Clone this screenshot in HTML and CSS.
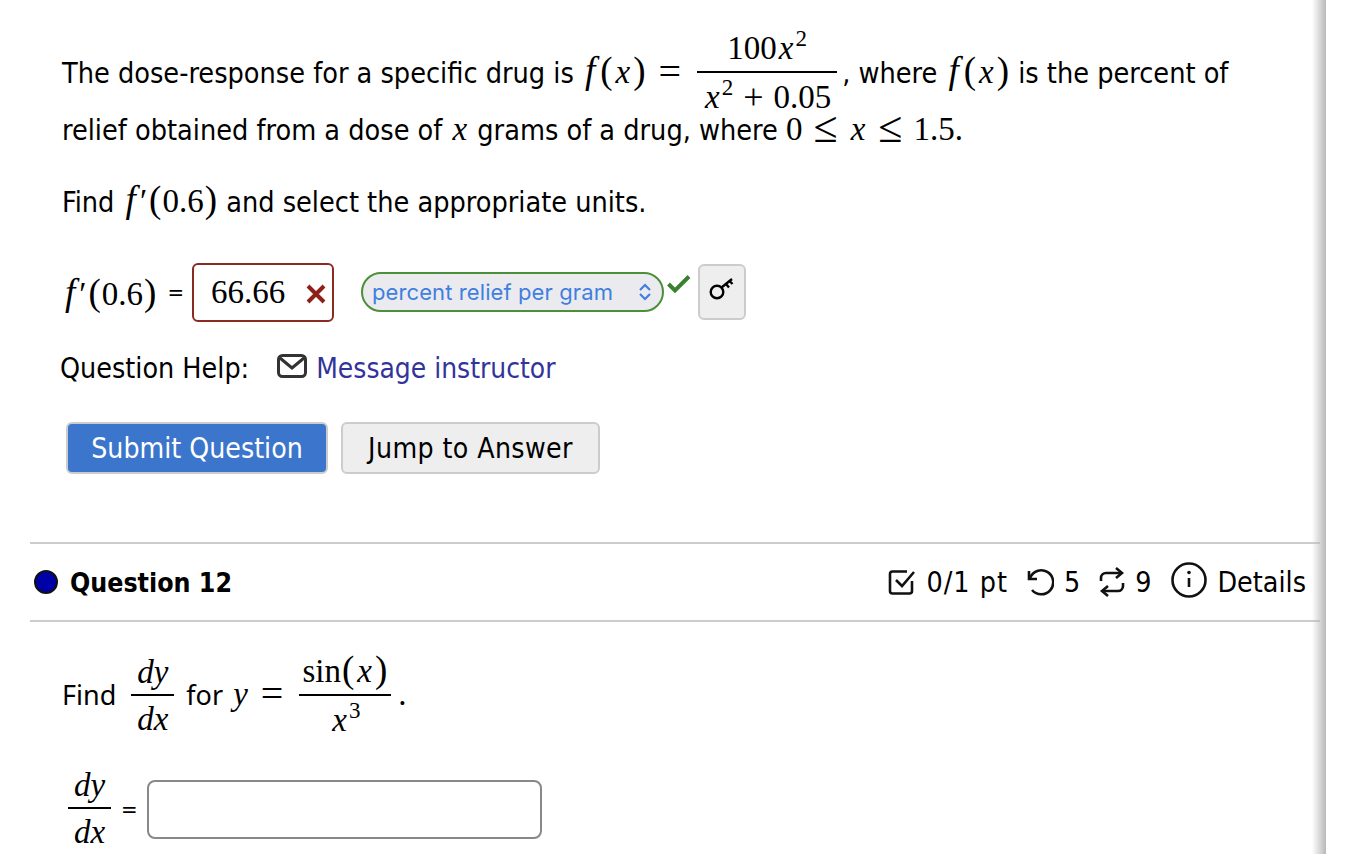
FILE: index.html
```html
<!DOCTYPE html>
<html lang="en">
<head>
<meta charset="utf-8">
<title>Question</title>
<link rel="stylesheet" href="styles.css">
</head>
<body>
<div class="page">
  <main class="main">
    <section class="body-a">
      <p class="line line-1">The dose-response for a specific drug is <span class="m"><i class="f">f</i><span class="p">(</span><i class="x">x</i><span class="p">)</span><span class="r eq-main">=</span></span><span class="frac frac-big"><span class="num">100<i class="x">x</i><sup>2</sup></span><span class="den"><i class="x">x</i><sup>2</sup><span class="r plus">+</span>0.05</span></span><span class="comma">,</span> where <span class="m"><i class="f">f</i><span class="p">(</span><i class="x">x</i><span class="p">)</span></span> is the percent of</p>
      <p class="line line-2">relief obtained from a dose of <span class="m"><i class="x">x</i></span> grams of a drug, where <span class="m">0<span class="r le">≤</span><i class="x">x</i><span class="r le">≤</span>1.5.</span></p>
      <p class="line line-3">Find <span class="m"><i class="f">f</i><span class="prime">′</span><span class="p">(</span>0.6<span class="p">)</span></span> and select the appropriate units.</p>
      <div class="answer-row">
        <span class="m answer-label"><i class="f">f</i><span class="prime">′</span><span class="p">(</span>0.6<span class="p">)</span></span>
        <span class="eq">=</span>
        <div class="field bad"><span class="m">66.66</span>
          <svg class="x-icon" viewBox="0 0 20 20"><path d="M2 2 18 18M18 2 2 18"/></svg>
        </div>
        <div class="select"><span>percent relief per gram</span>
          <svg class="chev" viewBox="0 0 14 20"><path d="M2 8 7 3l5 5M2 12l5 5 5-5"/></svg>
        </div>
        <svg class="check" viewBox="0 0 24 20"><path d="M1.500 10l6.500 6.500L22 2.500"/></svg>
        <button class="key-btn" type="button">
          <svg viewBox="0 0 28 26"><circle cx="9" cy="17" r="6.300"/><path d="M13.500 12.500 24 4M18 9l3 3.500M21.500 6l3 3"/></svg>
        </button>
      </div>
      <div class="help">
        <span class="help-label">Question Help:</span>
        <svg class="mail" viewBox="0 0 30 24"><rect x="1.500" y="1.500" width="27" height="21" rx="4"/><path d="M3 4l12 10L27 4"/></svg>
        <a class="help-link" href="#">Message instructor</a>
      </div>
      <div class="buttons">
        <button class="btn primary" type="button">Submit Question</button>
        <button class="btn jump" type="button">Jump to Answer</button>
      </div>
    </section>
    <header class="q-head">
      <div class="q-title"><span class="dot"></span><h2>Question 12</h2></div>
      <div class="q-meta">
        <svg class="ic ic-check" viewBox="0 0 28 28"><path d="M24 13v10a2.500 2.500 0 0 1-2.500 2.500h-17A2.500 2.500 0 0 1 2 23V6a2.500 2.500 0 0 1 2.500-2.500H19"/><path d="M8 12l6 6L26 4"/></svg>
        <span class="pts">0/1 pt</span>
        <svg class="ic ic-redo" viewBox="0 0 28 28"><path d="M3 3v8h8"/><path d="M4 10A12 12 0 1 1 6 22"/></svg>
        <span class="cnt">5</span>
        <svg class="ic ic-loop" viewBox="0 0 28 32"><path d="M18 2l6 5-6 5"/><path d="M24 7H8a5 5 0 0 0-5 5v3"/><path d="M10 30l-6-5 6-5"/><path d="M4 25h16a5 5 0 0 0 5-5v-3"/></svg>
        <span class="cnt cnt-last">9</span>
        <svg class="ic ic-info" viewBox="0 0 36 36"><circle cx="18" cy="18" r="16.500"/><path d="M18 16v9"/><circle class="fill" cx="18" cy="10.500" r="1.800"/></svg>
        <span class="details">Details</span>
      </div>
    </header>
    <section class="body-b">
      <p class="find">Find <span class="frac frac-dy frac-a"><span class="num"><i>dy</i></span><span class="den"><i>dx</i></span></span> for <span class="m y-eq"><i>y</i><span class="r eq-y">=</span></span><span class="frac frac-sin"><span class="num">sin<span class="p">(</span><i class="x">x</i><span class="p">)</span></span><span class="den"><i class="x">x</i><sup>3</sup></span></span><span class="m dot-end">.</span></p>
      <div class="answer-b">
        <span class="frac frac-dy"><span class="num"><i>dy</i></span><span class="den"><i>dx</i></span></span>
        <span class="eq">=</span>
        <div class="field empty"></div>
      </div>
    </section>
  </main>
  <div class="edge"></div>
</div>
</body>
</html>
```

FILE: styles.css
```css
* { box-sizing: border-box; }
html, body { margin: 0; padding: 0; background: #fff; }
.page { display: flex; width: 1356px; height: 854px; overflow: hidden; }
.main {
  width: 1320px; flex: none; padding-left: 30px; color: #000;
  font-family: "DejaVu Sans", sans-serif; font-stretch: condensed; font-size: 28.4px;
}
.edge { width: 14px; flex: none; margin-left: -8px; background: linear-gradient(90deg, rgba(190,190,190,0), #b8b8b8); }
p { margin: 0; }
.body-a { padding: 0 0 0 32px; height: 542px; }
.m, .frac { font-family: "Liberation Serif", serif; font-size: 33px; font-stretch: normal; }
.m i, .frac i { font-style: italic; }
.f { font-size: 37px; padding: 0 4px 0 3px; }
.x { padding: 0 2px; }
.p { font-size: 37px; line-height: 0; padding: 0 1px; }
.r { font-size: 40px; line-height: 0; margin: 0 8px; vertical-align: -2px; }
.eq-main { margin-left: 12px; }
.eq-y { margin-left: 13px; }
.y-eq { margin-left: 3px; }
.le { margin: 0 11px; font-size: 44px; }
.plus { font-size: 36px; margin: 0 10px; vertical-align: -1px; }
.prime { margin-right: 1px; }
sup { font-size: 23px; line-height: 0; vertical-align: 13px; }
.frac { display: inline-flex; flex-direction: column; align-items: center; vertical-align: middle; line-height: 1; }
.frac .num { display: block; padding: 0 0 6px; border-bottom: 2px solid #000; width: 100%; text-align: center; white-space: nowrap; }
.frac .den { display: block; padding-top: 8px; white-space: nowrap; }
.line { white-space: nowrap; font-size: 28.550px; }
.line-1 { height: 100px; padding-top: 32px; line-height: 40px; }
.frac-big { width: 140px; margin: 0 0 4px 8px; }
.comma { margin-left: 5px; }
.line-2 { height: 50px; line-height: 40px; margin-top: 9px; }
.line-3 { line-height: 44px; margin-top: 19px; height: 44px; }
.answer-row { display: flex; align-items: center; margin-top: 41px; height: 58px; }
.answer-label { margin: 0 10px 0 0; }
.eq { font-size: 22px; margin-right: 8px; }
.field { border-radius: 6px; background: #fff; }
.field.bad { display: flex; align-items: center; width: 142px; height: 59px; border: 2px solid #8a2a20; padding-left: 17px; flex: none; }
.x-icon { width: 20px; height: 20px; margin-left: 21px; margin-top: 4px; fill: none; stroke: #8f2018; stroke-width: 4; }
.select {
  display: flex; align-items: center; justify-content: space-between; flex: none;
  width: 303px; height: 40px; margin-left: 27px; padding: 0 10px 0 9px;
  border: 2px solid #4a8f3a; border-radius: 20px; background: #ebebef;
  color: #3f7fe0; font-family: Inter, sans-serif; font-stretch: normal; font-size: 22px; letter-spacing: .1px;
}
.chev { width: 14px; height: 20px; fill: none; stroke: #3f7fe0; stroke-width: 2.200; }
.check { width: 24px; height: 20px; margin: -16px 7px 0 3px; fill: none; stroke: #3a8030; stroke-width: 4; flex: none; }
.key-btn { width: 48px; height: 56px; padding: 0; flex: none; background: #eee; border: 2px solid #ccc; border-radius: 6px; display: flex; align-items: center; justify-content: center; }
.key-btn svg { width: 28px; height: 26px; margin-bottom: 8px; fill: none; stroke: #000; stroke-width: 2.400; }
.help { display: flex; align-items: center; height: 40px; margin-top: 27px; margin-left: -2px; }
.help-label { margin-right: 28px; }
.mail { width: 30px; height: 24px; margin-top: -4px; fill: none; stroke: #333; stroke-width: 3; margin-right: 9px; }
.help-link { color: #33339b; text-decoration: none; font-size: 27.900px; }
.buttons { display: flex; gap: 13px; margin-top: 34px; margin-left: 4px; }
.btn { height: 52px; width: 259px; padding: 0; font: inherit; font-size: 28.200px; font-stretch: condensed; background: #eee; color: #000; border: 2px solid #ccc; border-radius: 6px; }
.btn.primary { width: 262px; background: #3b76cc; color: #fff; }
.btn.jump { letter-spacing: .4px; }
.q-head {
  display: flex; align-items: center; justify-content: space-between;
  height: 80px; border-top: 2px solid #ccc; border-bottom: 2px solid #ccc; padding: 0 14px 0 4px;
}
.q-title { display: flex; align-items: center; gap: 12px; }
.dot { width: 24px; height: 24px; border-radius: 50%; background: #0000a8; border: 2px solid #111; }
h2 { margin: 0; font-size: 26.500px; font-weight: 700; }
.q-meta { display: flex; align-items: center; }
.ic { fill: none; stroke: #111; stroke-width: 2.600; flex: none; }
.ic-check, .ic-redo { width: 28px; height: 28px; }
.ic-loop { width: 28px; height: 32px; }
.ic-info { width: 36px; height: 36px; margin: -4px 10px 0 0; }
.ic .fill { fill: #111; stroke: none; }
.pts { margin: 0 18px 0 10px; letter-spacing: 1px; }
.cnt { margin: 0 18px 0 10px; }
.cnt-last { margin: 0 20px 0 9px; }
.body-b { padding: 0 0 0 32px; }
.find { margin-top: 32px; font-family: "Noto Sans", sans-serif; font-size: 27px; white-space: nowrap; line-height: 80px; height: 80px; font-stretch: normal; }
.frac-dy { width: 43px; }
.frac-dy .num { padding-bottom: 5px; }
.frac-dy .den { padding-top: 7px; }
.frac-a { margin: 0 5px 4px 8px; }
.frac-sin { width: 92px; margin: 0 0 4px 8px; }
.dot-end { margin-left: 7px; }
.answer-b { display: flex; align-items: center; margin-top: 35px; margin-left: 6px; }
.answer-b .eq { margin: 0 9px 0 10px; }
.field.empty { width: 395px; height: 59px; border: 2px solid #888; border-radius: 8px; flex: none; }
```
